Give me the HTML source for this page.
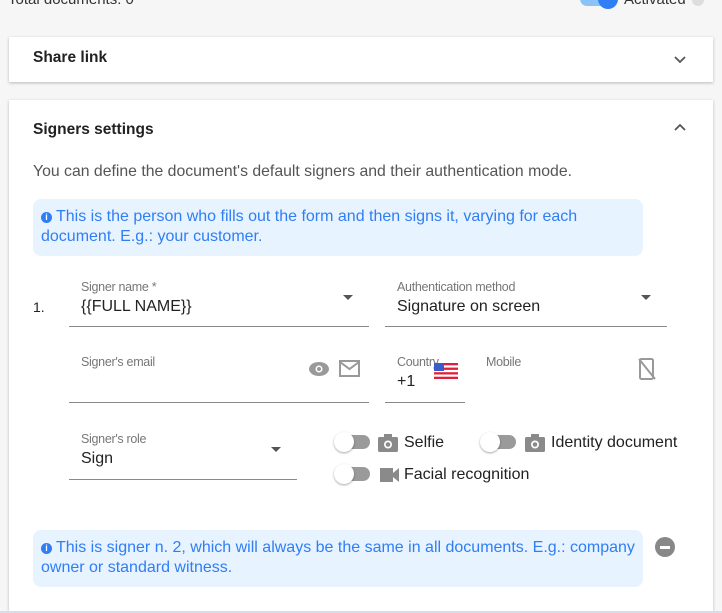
<!DOCTYPE html>
<html><head><style>
html,body{margin:0;width:722px;height:613px;overflow:hidden}
body{background:#f6f6f6;font-family:"Liberation Sans",sans-serif;position:relative;color:#333}
.a{position:absolute;white-space:nowrap}
.card{position:absolute;left:9px;width:704px;background:#fff;box-shadow:0 1px 3px rgba(0,0,0,.25)}
.lbl{font-size:12.5px;color:#777;letter-spacing:-.3px}
.val{font-size:16px;color:#222}
.line{position:absolute;height:1px;background:#888}
.info{position:absolute;left:33px;width:610px;background:#e7f3ff;border-radius:8px;color:#2f7ef5;font-size:16px;line-height:20px;padding:8px 8px;box-sizing:border-box}
.dot{display:inline-block;width:11px;height:11px;border-radius:50%;background:#2f7ef5;color:#fff;font-size:9px;text-align:center;line-height:11px;font-weight:bold;vertical-align:1px;margin-right:4px}
.tog{position:absolute;width:34px;height:14px;border-radius:7px;background:#9a9a9a}
.tog:after{content:"";position:absolute;left:-2px;top:-3px;width:20px;height:20px;border-radius:50%;background:#fff;box-shadow:0 1px 2px rgba(0,0,0,.35)}
.arr{position:absolute;width:0;height:0;border-left:5px solid transparent;border-right:5px solid transparent;border-top:5px solid #555}
</style></head><body>
<div class="a" style="left:8px;top:-9px;font-size:15px">Total documents: 0</div>
<div style="position:absolute;left:580px;top:-8px;width:34px;height:14px;border-radius:7px;background:#8cc3f7"></div>
<div style="position:absolute;left:598px;top:-11px;width:20px;height:20px;border-radius:50%;background:#2f7ef5"></div>
<div class="a" style="left:624px;top:-9px;font-size:15px">Activated</div>
<div style="position:absolute;left:692px;top:-6px;width:12px;height:12px;border-radius:50%;background:#ddd"></div>

<div class="card" style="top:37px;height:45px">
<div class="a" style="left:24px;top:12px;font-size:15.5px;font-weight:bold;color:#222">Share link</div>
<svg class="a" style="left:664px;top:18px" width="14" height="10"><path d="M2 2l5 5 5-5" stroke="#555" stroke-width="1.8" fill="none"/></svg>
</div>

<div class="card" style="top:100px;height:511px">
<div class="a" style="left:24px;top:21px;font-size:15.5px;font-weight:bold;color:#222">Signers settings</div>
<svg class="a" style="left:664px;top:22px" width="14" height="10"><path d="M2 8l5-5 5 5" stroke="#555" stroke-width="1.8" fill="none"/></svg>
<div class="a" style="left:24px;top:63px;font-size:15.8px;color:#555">You can define the document's default signers and their authentication mode.</div>
</div>

<div class="info" style="top:199px;height:57px"><span class="dot">i</span>This is the person who fills out the form and then signs it, varying for each document. E.g.: your customer.</div>

<div class="a val" style="left:33px;top:299px;font-size:14px">1.</div>
<div class="a lbl" style="left:81px;top:280px">Signer name *</div>
<div class="a val" style="left:81px;top:298px">{{FULL NAME}}</div>
<div class="arr" style="left:343px;top:295px"></div>
<div class="line" style="left:69px;top:326px;width:300px"></div>
<div class="a lbl" style="left:397px;top:280px">Authentication method</div>
<div class="a val" style="left:397px;top:298px">Signature on screen</div>
<div class="arr" style="left:641px;top:295px"></div>
<div class="line" style="left:385px;top:326px;width:282px"></div>

<div class="a lbl" style="left:81px;top:355px">Signer's email</div>
<svg class="a" style="left:308px;top:361px" width="22" height="16"><ellipse cx="11" cy="8" rx="10" ry="7" fill="#999"/><circle cx="11" cy="8" r="3.5" fill="#fff"/><circle cx="11" cy="8" r="2" fill="#999"/></svg>
<svg class="a" style="left:339px;top:360px" width="21" height="17"><rect x="1" y="1" width="19" height="15" fill="none" stroke="#999" stroke-width="2"/><path d="M1 2l9.5 7L20 2" stroke="#999" stroke-width="2" fill="none"/></svg>
<div class="line" style="left:69px;top:402px;width:300px"></div>
<div class="a lbl" style="left:397px;top:355px">Country</div>
<svg class="a" style="left:434px;top:363px" width="24" height="16"><rect width="24" height="16" fill="#fff"/><g fill="#e0203a"><rect y="0" width="24" height="2.3"/><rect y="4.6" width="24" height="2.3"/><rect y="9.2" width="24" height="2.3"/><rect y="13.7" width="24" height="2.3"/></g><rect width="10" height="8" fill="#3b5bc7"/></svg>
<div class="a val" style="left:397px;top:373px">+1</div>
<div class="line" style="left:385px;top:402px;width:80px"></div>
<div class="a lbl" style="left:486px;top:355px">Mobile</div>
<svg class="a" style="left:637px;top:357px" width="20" height="24"><rect x="3" y="2" width="13" height="20" rx="1.5" fill="none" stroke="#999" stroke-width="2"/><path d="M2 2l16 20" stroke="#999" stroke-width="2"/></svg>

<div class="a lbl" style="left:81px;top:432px">Signer's role</div>
<div class="a val" style="left:81px;top:450px">Sign</div>
<div class="arr" style="left:271px;top:447px"></div>
<div class="line" style="left:69px;top:479px;width:228px"></div>

<div class="tog" style="left:336px;top:435px"></div>
<svg class="a" style="left:378px;top:434px" width="20" height="18"><rect x="0" y="3" width="20" height="15" rx="1.5" fill="#8a8a8a"/><rect x="6" y="0" width="8" height="4" fill="#8a8a8a"/><circle cx="10" cy="10.5" r="4" fill="#fff"/><circle cx="10" cy="10.5" r="2.3" fill="#8a8a8a"/></svg>
<div class="a val" style="left:404px;top:434px">Selfie</div>
<div class="tog" style="left:482px;top:435px"></div>
<svg class="a" style="left:525px;top:434px" width="20" height="18"><rect x="0" y="3" width="20" height="15" rx="1.5" fill="#8a8a8a"/><rect x="6" y="0" width="8" height="4" fill="#8a8a8a"/><circle cx="10" cy="10.5" r="4" fill="#fff"/><circle cx="10" cy="10.5" r="2.3" fill="#8a8a8a"/></svg>
<div class="a val" style="left:551px;top:434px">Identity document</div>
<div class="tog" style="left:336px;top:467px"></div>
<svg class="a" style="left:380px;top:468px" width="20" height="14"><rect x="0" y="0" width="13" height="14" fill="#8a8a8a"/><path d="M13 5l6-5v14l-6-5z" fill="#8a8a8a"/></svg>
<div class="a val" style="left:404px;top:466px">Facial recognition</div>

<div class="info" style="top:530px;height:57px"><span class="dot">i</span>This is signer n. 2, which will always be the same in all documents. E.g.: company owner or standard witness.</div>
<div style="position:absolute;left:655px;top:537px;width:20px;height:20px;border-radius:50%;background:#888"></div>
<div style="position:absolute;left:660px;top:546px;width:10px;height:3px;background:#fff"></div>
<div style="position:absolute;left:0;top:611px;width:722px;height:2px;background:#d8dcec"></div>
</body></html>
